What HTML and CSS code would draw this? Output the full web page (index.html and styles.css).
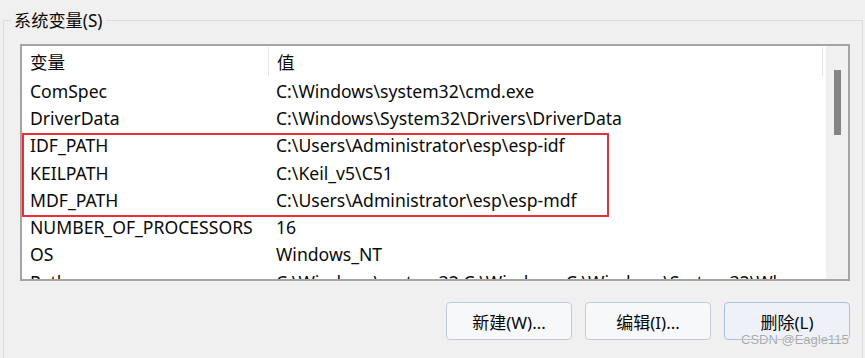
FILE: index.html
```html
<!DOCTYPE html>
<html lang="zh">
<head>
<meta charset="utf-8">
<title>系统变量</title>
<link rel="stylesheet" href="styles.css">
</head>
<body>
<div class="group">
  <div class="group-title">系统变量(S)</div>
  <div class="listbox">
    <div class="table">
      <div class="row head">
        <div class="c1">变量</div>
        <div class="c2">值</div>
      </div>
      <div class="row"><div class="c1">ComSpec</div><div class="c2">C:\Windows\system32\cmd.exe</div></div>
      <div class="row"><div class="c1">DriverData</div><div class="c2">C:\Windows\System32\Drivers\DriverData</div></div>
      <div class="row"><div class="c1">IDF_PATH</div><div class="c2">C:\Users\Administrator\esp\esp-idf</div></div>
      <div class="row"><div class="c1">KEILPATH</div><div class="c2">C:\Keil_v5\C51</div></div>
      <div class="row"><div class="c1">MDF_PATH</div><div class="c2">C:\Users\Administrator\esp\esp-mdf</div></div>
      <div class="row"><div class="c1">NUMBER_OF_PROCESSORS</div><div class="c2">16</div></div>
      <div class="row"><div class="c1">OS</div><div class="c2">Windows_NT</div></div>
      <div class="row"><div class="c1">Path</div><div class="c2">C:\Windows\system32;C:\Windows;C:\Windows\System32\Wbem</div></div>
      <div class="highlight"></div>
    </div>
    <div class="scrollbar"><div class="thumb"></div></div>
  </div>
  <div class="buttons">
    <button class="btn">新建(W)...</button>
    <button class="btn">编辑(I)...</button>
    <button class="btn default">删除(L)</button>
  </div>
</div>
<div class="watermark">CSDN @Eagle115</div>
</body>
</html>
```
FILE: styles.css
```css
html, body {
  margin: 0;
  padding: 0;
  background: #f0f0f0;
  overflow: hidden;
  height: 358px;
}
body {
  font-family: "Segoe UI", "Noto Sans", "Noto Sans CJK SC", sans-serif;
  color: #0a0a0a;
  font-size: 17.5px;
  position: relative;
}
.group {
  margin: 20px 0 0 3px;
  width: 858px;
  border: 1px solid #dcdcdc;
  border-bottom: none;
  height: 337px;
}
.group-title {
  margin: -12px 0 0 7px;
  padding: 0 3px;
  width: fit-content;
  background: #f0f0f0;
  line-height: 24px;
  font-size: 17.2px;
}
.listbox {
  margin: 11px 0 0 16px;
  width: 826px;
  height: 233px;
  border: 2px solid #a4a4a4;
  background: #fff;
  display: flex;
}
.table {
  position: relative;
  flex: 1;
  overflow: hidden;
  font-size: 17.6px;
}
.row {
  display: flex;
  height: 27.3px;
  align-items: center;
  white-space: nowrap;
}
.row.head {
  height: 31px;
}
.c1 {
  width: 238px;
  padding-left: 8px;
  flex: none;
}
.c2 {
  padding-left: 8px;
}
.head .c1, .head .c2 {
  align-self: stretch;
  display: flex;
  align-items: center;
  margin: 1px 0;
}
.head .c1 {
  border-right: 1px solid #e6e6e6;
}
.head .c2 {
  width: 545px;
  border-right: 1px solid #e6e6e6;
}
.highlight {
  position: absolute;
  left: 0;
  top: 87px;
  width: 583px;
  height: 80px;
  border: 2px solid #e8303a;
}
.scrollbar {
  width: 22px;
  flex: none;
  background: #f0f0f0;
  display: flex;
  justify-content: center;
}
.thumb {
  margin-top: 24px;
  width: 7px;
  height: 65px;
  background: #858585;
}
.buttons {
  display: flex;
  justify-content: flex-end;
  gap: 13px;
  margin-top: 21px;
  padding-right: 12px;
}
.btn {
  width: 126px;
  height: 38px;
  border: 1px solid #c3ccd6;
  border-radius: 4px;
  background: #f7f8fa;
  font-family: "Segoe UI", "Noto Sans", "Noto Sans CJK SC", sans-serif;
  font-size: 17px;
  color: #0a0a0a;
  padding: 0;
}
.btn.default {
  border-color: #a9c1de;
  background: #eef2f8;
}
.watermark {
  position: absolute;
  left: 741px;
  top: 332px;
  font-family: "Liberation Sans", Arial, sans-serif;
  font-size: 13px;
  color: #a8a8a8;
  text-shadow: 0 0 1px #fff, 0 0 1px #fff;
}
```
